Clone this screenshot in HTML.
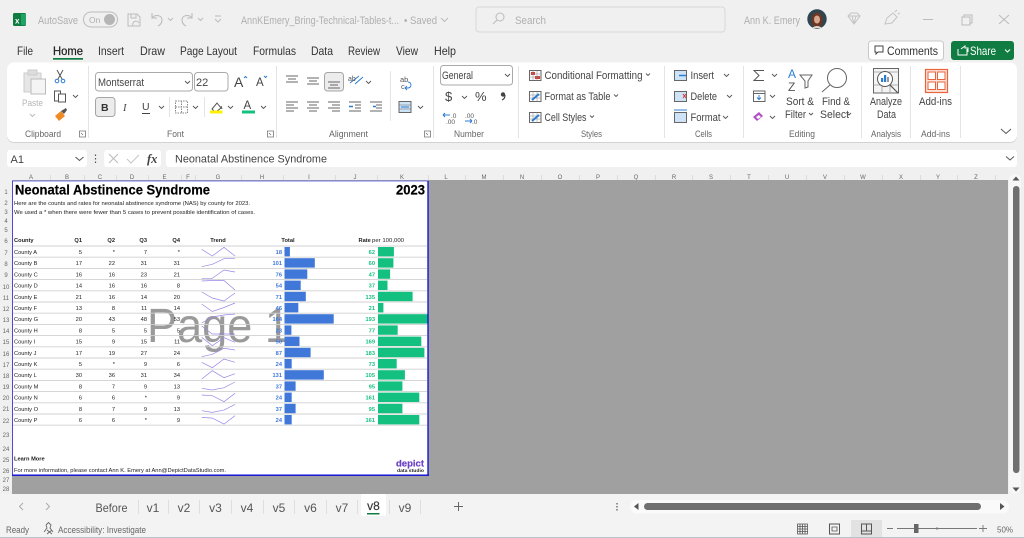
<!DOCTYPE html>
<html><head><meta charset="utf-8"><title>Excel</title>
<style>
html,body{margin:0;padding:0;background:#f0f0f0;width:1024px;height:538px;overflow:hidden}
svg{display:block;position:absolute;left:0;top:0;filter:blur(.3px)}
text{font-family:"Liberation Sans",sans-serif;fill:#404040;font-size:10px}
.t{fill:#afafaf;font-size:11px}
.m{fill:#333;font-size:12px}
.r{fill:#444;font-size:11px}
.g{fill:#666;font-size:9.5px}
.h{fill:#666;font-size:6px;text-anchor:middle}
.d{fill:#222;font-size:5.7px}
.n{fill:#222;font-size:5.7px;text-anchor:end}
.b{fill:#3f78d8;font-size:5.7px;text-anchor:end;font-weight:bold}
.c{fill:#14c080;font-size:5.7px;text-anchor:end;font-weight:bold}
.tab{fill:#555;font-size:12px;text-anchor:middle}
.ln{fill:none;stroke:#666;stroke-width:1}
.ch{fill:none;stroke:#555;stroke-width:.9}
.sp{fill:none;stroke:#9c86e6;stroke-width:.7}
</style></head><body>
<svg width="1024" height="538" viewBox="0 0 1024 538" xmlns="http://www.w3.org/2000/svg">
<rect width="1024" height="538" fill="#f0f0f0"/>

<!-- title bar -->
<rect x="13" y="13" width="13" height="13" rx="1.5" fill="#107c41"/><rect x="21" y="14" width="5" height="11" fill="#21a366"/>
<text x="15" y="23.500" style="font-size:8px;font-weight:bold;fill:#fff">x</text>
<text x="38" y="24" class="t" textLength="40" lengthAdjust="spacingAndGlyphs">AutoSave</text>
<rect x="83.500" y="12" width="34" height="15" rx="7.500" fill="none" stroke="#bbb"/>
<text x="89" y="23" class="t" style="font-size:8.500px">On</text><circle cx="109.500" cy="19.500" r="5.500" fill="#b5b5b5"/>
<path d="M128 14h9l3 3v9h-12zM131 14v4h5v-4M133 26a3 3 0 0 1 6-3" fill="none" stroke="#bdbdbd"/>
<path d="M152 13v5h5M152 18c3-4 10-3 10 2 0 3-2 5-4 6" fill="none" stroke="#bdbdbd" stroke-width="1.100"/>
<path d="M168 18l2.500 2.500 2.500-2.500M198 18l2.500 2.500 2.500-2.500" fill="none" stroke="#bdbdbd"/>
<path d="M192 13v5h-5M192 18c-3-4-10-3-10 2 0 3 2 5 4 6" fill="none" stroke="#bdbdbd" stroke-width="1.100"/>
<path d="M215 16h6M215 19l3 3 3-3" fill="none" stroke="#bdbdbd"/>
<text x="241" y="24" class="t" textLength="158" lengthAdjust="spacingAndGlyphs">AnnKEmery_Bring-Technical-Tables-t...</text>
<text x="404" y="24" class="t" textLength="33" lengthAdjust="spacingAndGlyphs">• Saved</text><path d="M441 18l3.500 3.500 3.500-3.500" fill="none" stroke="#bbb"/>
<rect x="476" y="7" width="249" height="25" rx="3" fill="#f0f0f0" stroke="#d8d8d8"/>
<circle cx="500" cy="17" r="4" fill="none" stroke="#bbb"/><path d="M497 20l-4 4" stroke="#bbb"/>
<text x="515" y="24" class="t" textLength="31" lengthAdjust="spacingAndGlyphs">Search</text>
<text x="744" y="24" class="t" textLength="56" lengthAdjust="spacingAndGlyphs">Ann K. Emery</text>
<circle cx="817" cy="19" r="9.700" fill="#2f4650"/><ellipse cx="817" cy="20" rx="5.500" ry="7.500" fill="#6d3524"/><ellipse cx="817" cy="19.500" rx="3" ry="4" fill="#d8a88e"/><path d="M812 28q5-4 10 0" fill="#e6d6cc"/>
<path d="M848 16l3-3h6l3 3-6 8zM848 16h12M852 16l2 8 2-8" fill="none" stroke="#c4c4c4"/>
<path d="M885 24l2-6 6-5 4 4-5 6zM895 12l2-2M898 14l2-1" fill="none" stroke="#c4c4c4"/>
<path d="M923 19.500h10" stroke="#bbb"/><path d="M962 17h8v8h-8zM964 17v-2h8v8h-2" fill="none" stroke="#bbb"/>
<path d="M999 15l10 9M1009 15l-10 9" stroke="#bbb"/>

<!-- tabs -->
<text x="17" y="55" class="m" textLength="16" lengthAdjust="spacingAndGlyphs">File</text>
<text x="53" y="55" class="m" textLength="30" lengthAdjust="spacingAndGlyphs" style="fill:#222;stroke:#222;stroke-width:.25">Home</text>
<rect x="53" y="58" width="30" height="1.700" fill="#107c41"/>
<text x="98" y="55" class="m" textLength="26" lengthAdjust="spacingAndGlyphs">Insert</text>
<text x="140" y="55" class="m" textLength="25" lengthAdjust="spacingAndGlyphs">Draw</text>
<text x="180" y="55" class="m" textLength="57" lengthAdjust="spacingAndGlyphs">Page Layout</text>
<text x="253" y="55" class="m" textLength="43" lengthAdjust="spacingAndGlyphs">Formulas</text>
<text x="311" y="55" class="m" textLength="22" lengthAdjust="spacingAndGlyphs">Data</text>
<text x="348" y="55" class="m" textLength="32" lengthAdjust="spacingAndGlyphs">Review</text>
<text x="396" y="55" class="m" textLength="22" lengthAdjust="spacingAndGlyphs">View</text>
<text x="434" y="55" class="m" textLength="22" lengthAdjust="spacingAndGlyphs">Help</text>
<rect x="868.500" y="41" width="75" height="19" rx="3" fill="#fff" stroke="#c8c8c8"/>
<path d="M875 46h8v6h-5l-2 2v-2h-1z" fill="none" stroke="#444"/>
<text x="887" y="55" class="m" textLength="51" lengthAdjust="spacingAndGlyphs">Comments</text>
<rect x="951" y="41" width="63" height="19" rx="3" fill="#107c41"/>
<path d="M958 49v6h9v-6M961 49l4-3v2h3v4" fill="none" stroke="#fff"/>
<text x="970" y="55" class="m" textLength="26" lengthAdjust="spacingAndGlyphs" style="fill:#fff">Share</text>
<path d="M1005 49.500l2.500 2.500 2.500-2.500" fill="none" stroke="#fff"/>

<!-- ribbon -->
<rect x="7" y="62.500" width="1010" height="79.500" rx="7" fill="#d2d2d2" transform="translate(0 1)"/>
<rect x="7" y="62.500" width="1010" height="79.500" rx="7" fill="#fff"/>
<path d="M88.500 66v72M276.500 66v72M390.500 71v50M433.500 66v72M518.500 66v72M664.500 66v72M743.500 66v72M861.500 66v72M910.500 66v72M960.500 66v72" stroke="#e4e4e4"/>
<path d="M169.500 97v20M204.500 97v20" stroke="#e4e4e4"/>
<!-- clipboard -->
<path d="M24 73h17v19h-17z" fill="#e6e6e6" stroke="#ccc"/><rect x="31" y="79" width="14.500" height="15" fill="#f4f4f4" stroke="#bbb"/><rect x="28" y="70" width="9" height="5" fill="#ddd" stroke="#ccc"/>
<text x="22" y="106" class="g" style="fill:#b5b5b5" textLength="21" lengthAdjust="spacingAndGlyphs">Paste</text>
<path d="M30 114l2.500 2.500 2.500-2.500" fill="none" stroke="#bbb"/>
<path d="M57 70l5 9M63 70l-5 9" stroke="#555" fill="none"/><circle cx="57" cy="81" r="1.800" fill="none" stroke="#2b7cd3"/><circle cx="63" cy="81" r="1.800" fill="none" stroke="#2b7cd3"/>
<path d="M54.500 91h6v10h-6z" fill="#fff" stroke="#555"/><path d="M58.500 94h7v8h-7z" fill="#fff" stroke="#555"/>
<path d="M73 95l2.500 2.500 2.500-2.500" class="ch"/>
<path d="M55 116l6-5 4 5-6 5z" fill="#f08a24"/><path d="M61 111l5-3 1 2-3 4" fill="#555"/>
<text x="25" y="137" class="g" textLength="36" lengthAdjust="spacingAndGlyphs">Clipboard</text>
<path d="M79.500 131h6v6h-6zM83 135l-2-2" fill="none" stroke="#777" stroke-width=".8"/>
<!-- font -->
<rect x="95.500" y="72.500" width="97" height="18.500" rx="3" fill="#fff" stroke="#aaa"/>
<text x="98" y="86" class="r" textLength="46" lengthAdjust="spacingAndGlyphs">Montserrat</text>
<path d="M185 81l2.500 2.500 2.500-2.500M221 81l2.500 2.500 2.500-2.500" class="ch"/>
<rect x="194.500" y="72.500" width="33.500" height="18.500" rx="3" fill="#fff" stroke="#aaa"/>
<text x="196" y="86" class="r">22</text>
<text x="234" y="87" style="font-size:14px;fill:#444">A</text><path d="M244 78l1.500-1.500 1.500 1.500" fill="none" stroke="#2b7cd3"/>
<text x="256" y="86" style="font-size:11.500px;fill:#444">A</text><path d="M264 76l1.500 1.500 1.500-1.500" fill="none" stroke="#2b7cd3"/>
<rect x="95.500" y="97.500" width="19.500" height="19" rx="3" fill="#ececec" stroke="#a5a5a5"/>
<text x="101" y="111" style="font-size:10.500px;font-weight:bold;fill:#333">B</text>
<text x="123" y="111" style="font-size:10.500px;font-style:italic;font-family:'Liberation Serif',serif;fill:#444">I</text>
<text x="142" y="110" style="font-size:10.500px;fill:#444">U</text><path d="M142 113.500h8" stroke="#444"/>
<path d="M159 106l2.500 2.500 2.500-2.500M193 106l2.500 2.500 2.500-2.500M228 106l2.500 2.500 2.500-2.500M261 106l2.500 2.500 2.500-2.500" class="ch"/>
<path d="M175.500 101h12v12h-12zM181.500 101v12M175.500 107h12" fill="none" stroke="#888" stroke-dasharray="1.500 1"/>
<path d="M212 109l5-6 4 5-4 3h-3z" fill="#fff" stroke="#555"/><path d="M221 106l1 3" stroke="#555"/>
<rect x="210" y="110.500" width="12.500" height="3" fill="#ffef00"/>
<text x="243.500" y="109" style="font-size:11.500px;fill:#444">A</text><rect x="242" y="110.500" width="13" height="3" fill="#14c080"/>
<text x="167" y="137" class="g" textLength="17" lengthAdjust="spacingAndGlyphs">Font</text>
<path d="M267.500 131h6v6h-6zM271 135l-2-2" fill="none" stroke="#777" stroke-width=".8"/>
<!-- alignment -->
<path d="M286 76h12M288 79h8M286 82h12M307 78h12M309 81h8M307 84h12" class="ln"/>
<rect x="324.500" y="72.500" width="19" height="18.500" rx="3" fill="#ececec" stroke="#a5a5a5"/>
<path d="M328 82h12M330 85h8M328 88h12" class="ln"/>
<path d="M350 83l9-7M355 84l8-7" stroke="#2b7cd3" fill="none"/><text x="348" y="81" style="font-size:7px;fill:#555">ab</text>
<path d="M366 81l2.500 2.500 2.500-2.500M418 106l2.500 2.500 2.500-2.500" class="ch"/>
<path d="M286 102h12M286 105h8M286 108h12M286 111h8M307 102h12M309 105h8M307 108h12M309 111h8M328 102h12M332 105h8M328 108h12M332 111h8M349 102h12M349 111h12M370 102h12M370 111h12" class="ln"/>
<path d="M355 105h6M355 108h6M376 105h6M376 108h6" class="ln"/>
<path d="M349 106.500h4M373 106.500h3" stroke="#2b7cd3" stroke-width="1.500"/>
<text x="400" y="82" style="font-size:7.500px;fill:#555">ab</text><text x="401" y="89" style="font-size:7.500px;fill:#555">c</text><path d="M405 88h3a2 2 0 0 0 0-6M405 88l2-2M405 88l2 2" fill="none" stroke="#2b7cd3" stroke-width=".9"/>
<rect x="399" y="101.500" width="12" height="11" fill="#cfe3f7" stroke="#666"/><path d="M399 105h12M399 109h12" stroke="#666" stroke-width=".6"/><path d="M401 107h8" stroke="#2b7cd3"/>
<text x="329" y="137" class="g" textLength="39" lengthAdjust="spacingAndGlyphs">Alignment</text>
<path d="M424.500 131h6v6h-6zM428 135l-2-2" fill="none" stroke="#777" stroke-width=".8"/>
<!-- number -->
<rect x="440.500" y="65.500" width="72" height="19.500" rx="3" fill="#fff" stroke="#aaa"/>
<text x="442" y="79" class="r" textLength="31" lengthAdjust="spacingAndGlyphs">General</text>
<path d="M505 74l2.500 2.500 2.500-2.500M462 96l2.500 2.500 2.500-2.500" class="ch"/>
<text x="445" y="101" style="font-size:13px;fill:#444">$</text>
<text x="475" y="101" style="font-size:13px;fill:#444">%</text>
<circle cx="503" cy="94.500" r="2.200" fill="#444"/><path d="M505 95c0 3-1 4-3 5" fill="none" stroke="#444" stroke-width="1.200"/>
<text x="451" y="118" style="font-size:6.500px;fill:#555">.0</text><text x="446" y="124" style="font-size:6.500px;fill:#555">.00</text>
<path d="M443 115h7M443 115l2-2M443 115l2 2" fill="none" stroke="#2b7cd3"/>
<text x="465" y="118" style="font-size:6.500px;fill:#555">.00</text><text x="472" y="124" style="font-size:6.500px;fill:#555">.0</text>
<path d="M465 121h7M472 121l-2-2M472 121l-2 2" fill="none" stroke="#2b7cd3"/>
<text x="454" y="137" class="g" textLength="30" lengthAdjust="spacingAndGlyphs">Number</text>
<!-- styles -->
<rect x="529.500" y="70.500" width="11.500" height="10" fill="#fff" stroke="#666"/><rect x="531" y="72" width="4" height="3" fill="#d9352a"/><rect x="535" y="76" width="5" height="3" fill="#d9352a"/><path d="M533 70.500v10M537 70.500v10M529.500 74h11.500M529.500 77h11.500" stroke="#888" stroke-width=".5"/>
<rect x="529.500" y="91.500" width="11.500" height="10" fill="#fff" stroke="#666"/><path d="M533 91.500v10M537 91.500v10M529.500 95h11.500M529.500 98h11.500" stroke="#888" stroke-width=".5"/><path d="M532 100l7-6" stroke="#2b7cd3" stroke-width="2"/>
<rect x="529.500" y="112.500" width="11.500" height="10" fill="#fff" stroke="#666"/><path d="M533 112.500v10M537 112.500v10M529.500 116h11.500M529.500 119h11.500" stroke="#888" stroke-width=".5"/><path d="M532 121l7-6" stroke="#2b7cd3" stroke-width="2"/>
<text x="544.500" y="79" class="r" textLength="98" lengthAdjust="spacingAndGlyphs">Conditional Formatting</text>
<text x="544.500" y="100" class="r" textLength="66" lengthAdjust="spacingAndGlyphs">Format as Table</text>
<text x="544.500" y="121" class="r" textLength="42" lengthAdjust="spacingAndGlyphs">Cell Styles</text>
<path d="M646 73.500l2 2 2-2M614 94.500l2 2 2-2M590 115.500l2 2 2-2" class="ch"/>
<text x="581" y="137" class="g" textLength="21" lengthAdjust="spacingAndGlyphs">Styles</text>
<!-- cells -->
<rect x="674.500" y="70.500" width="12" height="10" fill="#cfe3f7" stroke="#666"/><path d="M679 75.500h7" stroke="#2b7cd3" stroke-width="1.500"/>
<rect x="674.500" y="91.500" width="12" height="10" fill="#cfe3f7" stroke="#666"/><path d="M683 94l3 4M686 94l-3 4" stroke="#d9352a"/>
<rect x="674.500" y="112.500" width="12" height="10" fill="#cfe3f7" stroke="#666"/><path d="M674 110h13" stroke="#2b7cd3"/>
<text x="690.500" y="79" class="r" textLength="23.500" lengthAdjust="spacingAndGlyphs">Insert</text>
<text x="690.500" y="100" class="r" textLength="26.500" lengthAdjust="spacingAndGlyphs">Delete</text>
<text x="690.500" y="121" class="r" textLength="30" lengthAdjust="spacingAndGlyphs">Format</text>
<path d="M724 74l2.500 2.500 2.500-2.500M727 95l2.500 2.500 2.500-2.500M723 116l2.500 2.500 2.500-2.500" class="ch"/>
<text x="695" y="137" class="g" textLength="17" lengthAdjust="spacingAndGlyphs">Cells</text>
<!-- editing -->
<path d="M764 70.500h-10l5 5-5 5h10" fill="none" stroke="#555"/>
<path d="M772 74l2.500 2.500 2.500-2.500M770 95l2.500 2.500 2.500-2.500M770 116l2.500 2.500 2.500-2.500" class="ch"/>
<rect x="753.500" y="91" width="11.500" height="10.500" fill="#fff" stroke="#666"/><path d="M753.500 93.500h11.500" stroke="#666"/><path d="M759 95v4M757 97.500l2 2 2-2" fill="none" stroke="#2b7cd3"/>
<path d="M753 117l6-5 4 4-6 5z" fill="#b14fc5"/><path d="M756 117l3-2 2 2-3 2z" fill="#fff"/>
<text x="788" y="78" style="font-size:12px;fill:#2b7cd3">A</text><text x="788" y="91" style="font-size:12px;fill:#555">Z</text>
<path d="M800 75h12l-4 6v6l-3 1v-7z" fill="none" stroke="#666"/>
<text x="786" y="105" class="r" textLength="28" lengthAdjust="spacingAndGlyphs">Sort &amp;</text>
<text x="785" y="118" class="r" textLength="21" lengthAdjust="spacingAndGlyphs">Filter</text>
<circle cx="837" cy="78" r="9.500" fill="none" stroke="#666"/><path d="M830 85l-8 7" stroke="#666"/>
<text x="822" y="105" class="r" textLength="28" lengthAdjust="spacingAndGlyphs">Find &amp;</text>
<text x="820" y="118" class="r" textLength="29" lengthAdjust="spacingAndGlyphs">Select</text>
<path d="M809 113l2 2 2-2M847 113l2 2 2-2" class="ch"/>
<text x="789" y="137" class="g" textLength="26" lengthAdjust="spacingAndGlyphs">Editing</text>
<!-- analyze -->
<rect x="873.500" y="68.500" width="25" height="24.500" fill="#f4f4f4" stroke="#666"/>
<path d="M873.500 72h25M873.500 85h25M882 85v8M890 85v8" stroke="#999" stroke-width=".8"/>
<circle cx="885" cy="79" r="7.500" fill="#fff" stroke="#555"/><rect x="881" y="78" width="2.200" height="4" fill="#2b7cd3"/><rect x="884" y="75" width="2.200" height="7" fill="#2b7cd3"/><rect x="887" y="77" width="2" height="5" fill="#999"/>
<path d="M890 85l8 8" stroke="#555" stroke-width="1.200"/>
<text x="870" y="105" class="r" textLength="32" lengthAdjust="spacingAndGlyphs">Analyze</text><text x="877" y="118" class="r" textLength="19" lengthAdjust="spacingAndGlyphs">Data</text>
<text x="871" y="137" class="g" textLength="30" lengthAdjust="spacingAndGlyphs">Analysis</text>
<rect x="925.500" y="69.500" width="22" height="23" fill="#fbe4dc" stroke="#e9643b" stroke-width="1.200"/>
<rect x="928" y="72" width="7.500" height="7.500" fill="#fff" stroke="#e9643b"/><rect x="937.500" y="72" width="7.500" height="7.500" fill="#fff" stroke="#e9643b"/><rect x="928" y="82" width="7.500" height="7.500" fill="#fff" stroke="#e9643b"/><rect x="937.500" y="82" width="7.500" height="7.500" fill="#fff" stroke="#e9643b"/>
<text x="919" y="105" class="r" textLength="33" lengthAdjust="spacingAndGlyphs">Add-ins</text>
<text x="921" y="137" class="g" textLength="29" lengthAdjust="spacingAndGlyphs">Add-ins</text>
<path d="M1001 129l5 4.500 5-4.500" fill="none" stroke="#555"/>

<!-- formula bar -->
<rect x="7" y="150" width="80" height="17" rx="3" fill="#fff"/>
<text x="10.500" y="163" class="r">A1</text>
<path d="M75.500 157l4 3.500 4-3.500" fill="none" stroke="#555"/>
<path d="M95.500 154.500v1.500M95.500 158v1.500M95.500 161.500v1.500" stroke="#555" stroke-width="1.200"/>
<rect x="104" y="150" width="57" height="17" rx="3" fill="#fff"/>
<path d="M109 154l9 9M118 154l-9 9" stroke="#bbb"/><path d="M127 159l4 4 8-8" fill="none" stroke="#c4c4c4"/>
<text x="147" y="163" style="font-family:'Liberation Serif',serif;font-style:italic;font-size:12.500px;fill:#444;font-weight:bold">fx</text>
<rect x="166" y="150" width="851" height="17" rx="3" fill="#fff"/>
<text x="175" y="162.500" class="r" textLength="152" lengthAdjust="spacingAndGlyphs">Neonatal Abstinence Syndrome</text>
<path d="M1006 156.500l4 3.500 4-3.500" fill="none" stroke="#555"/>

<!-- col headers -->
<g>
<text x="31" y="179" class="h">A</text><text x="67" y="179" class="h">B</text><text x="100" y="179" class="h">C</text><text x="132" y="179" class="h">D</text><text x="164.500" y="179" class="h">E</text><text x="188" y="179" class="h">F</text><text x="218" y="179" class="h">G</text><text x="262" y="179" class="h">H</text><text x="309" y="179" class="h">I</text><text x="355" y="179" class="h">J</text><text x="402" y="179" class="h">K</text><text x="446" y="179" class="h">L</text><text x="484" y="179" class="h">M</text><text x="522" y="179" class="h">N</text><text x="560" y="179" class="h">O</text><text x="598" y="179" class="h">P</text><text x="636" y="179" class="h">Q</text><text x="674" y="179" class="h">R</text><text x="711" y="179" class="h">S</text><text x="749" y="179" class="h">T</text><text x="787" y="179" class="h">U</text><text x="825" y="179" class="h">V</text><text x="863" y="179" class="h">W</text><text x="901" y="179" class="h">X</text><text x="938" y="179" class="h">Y</text><text x="976" y="179" class="h">Z</text>
</g>
<path d="M50.500 175v5M84.500 175v5M116.500 175v5M148.500 175v5M181.500 175v5M195.500 175v5M241.500 175v5M283.500 175v5M335.500 175v5M377.500 175v5M428.500 175v5M465.500 175v5M503.500 175v5M541.500 175v5M579.500 175v5M617.500 175v5M655.500 175v5M692.500 175v5M730.500 175v5M768.500 175v5M806.500 175v5M844.500 175v5M882.500 175v5M920.500 175v5M957.500 175v5M995.500 175v5" stroke="#dcdcdc"/>

<!-- sheet -->
<rect x="12" y="180" width="996" height="314" fill="#a0a0a0"/>
<rect x="12.500" y="181" width="415" height="294" fill="#fff"/>
<!-- row labels -->
<g>
<text x="6" y="194" class="h">1</text><text x="6" y="205" class="h">2</text><text x="6" y="214" class="h">3</text><text x="6" y="223" class="h">4</text><text x="6" y="232" class="h">5</text><text x="6" y="243" class="h">6</text><text x="6" y="255" class="h">7</text><text x="6" y="266" class="h">8</text><text x="6" y="277" class="h">9</text><text x="6" y="289" class="h">10</text><text x="6" y="300" class="h">11</text><text x="6" y="311" class="h">12</text><text x="6" y="322" class="h">13</text><text x="6" y="333" class="h">14</text><text x="6" y="344" class="h">15</text><text x="6" y="356" class="h">16</text><text x="6" y="367" class="h">17</text><text x="6" y="378" class="h">18</text><text x="6" y="389" class="h">19</text><text x="6" y="400" class="h">20</text><text x="6" y="411" class="h">21</text><text x="6" y="423" class="h">22</text><text x="6" y="437" class="h">23</text><text x="6" y="451" class="h">24</text><text x="6" y="462" class="h">25</text><text x="6" y="473" class="h">26</text><text x="6" y="482" class="h">27</text><text x="6" y="491" class="h">28</text>
</g>
<!-- watermark -->
<text x="147" y="342" style="font-size:48px;fill:#9a9a9a" textLength="143" lengthAdjust="spacingAndGlyphs">Page 1</text>
<!-- row rules -->
<path d="M13 246h414M13 257.200h414M13 268.400h414M13 279.600h414M13 290.800h414M13 302h414M13 313.200h414M13 324.400h414M13 335.600h414M13 346.800h414M13 358h414M13 369.200h414M13 380.400h414M13 391.600h414M13 402.800h414M13 414h414M13 425.200h414" stroke="#d0d0d0" stroke-width=".9"/>
<!-- page text -->
<text x="15" y="194.500" style="font-size:13.500px;font-weight:bold;fill:#000;stroke:#000;stroke-width:.2" textLength="195" lengthAdjust="spacingAndGlyphs">Neonatal Abstinence Syndrome</text>
<text x="396" y="194.500" style="font-size:13.500px;font-weight:bold;fill:#000;stroke:#000;stroke-width:.2" textLength="29" lengthAdjust="spacingAndGlyphs">2023</text>
<text x="14" y="205" class="d" textLength="236" lengthAdjust="spacingAndGlyphs">Here are the counts and rates for neonatal abstinence syndrome (NAS) by county for 2023.</text>
<text x="14" y="214" class="d" textLength="241" lengthAdjust="spacingAndGlyphs">We used a * when there were fewer than 5 cases to prevent possible identification of cases.</text>
<g>
<text x="14" y="242" class="d" style="font-weight:bold">County</text>
<text x="82" y="242" class="n" style="font-weight:bold">Q1</text><text x="115" y="242" class="n" style="font-weight:bold">Q2</text><text x="147" y="242" class="n" style="font-weight:bold">Q3</text><text x="180" y="242" class="n" style="font-weight:bold">Q4</text>
<text x="218" y="242" class="n" style="font-weight:bold;text-anchor:middle">Trend</text>
<text x="288" y="242" class="n" style="font-weight:bold;text-anchor:middle">Total</text>
<text x="358.500" y="242" class="d" style="font-weight:bold">Rate</text>
</g>
<text x="372" y="242" class="d" textLength="32" lengthAdjust="spacingAndGlyphs">per 100,000</text>
<!-- bars total -->
<g fill="#3f78d8">
<rect x="284.500" y="247" width="5.400" height="9.400"/><rect x="284.500" y="258.200" width="30.300" height="9.400"/><rect x="284.500" y="269.400" width="22.800" height="9.400"/><rect x="284.500" y="280.600" width="16.200" height="9.400"/><rect x="284.500" y="291.800" width="21.300" height="9.400"/><rect x="284.500" y="303" width="13.800" height="9.400"/><rect x="284.500" y="314.200" width="49.200" height="9.400"/><rect x="284.500" y="325.400" width="6.900" height="9.400"/><rect x="284.500" y="336.600" width="15" height="9.400"/><rect x="284.500" y="347.800" width="26.100" height="9.400"/><rect x="284.500" y="359" width="7.200" height="9.400"/><rect x="284.500" y="370.200" width="39.300" height="9.400"/><rect x="284.500" y="381.400" width="11.100" height="9.400"/><rect x="284.500" y="392.600" width="7.200" height="9.400"/><rect x="284.500" y="403.800" width="11.100" height="9.400"/><rect x="284.500" y="415" width="7.200" height="9.400"/>
</g>
<!-- bars rate -->
<g fill="#14c080">
<rect x="378" y="247" width="15.900" height="9.400"/><rect x="378" y="258.200" width="15.400" height="9.400"/><rect x="378" y="269.400" width="12.100" height="9.400"/><rect x="378" y="280.600" width="9.500" height="9.400"/><rect x="378" y="291.800" width="34.600" height="9.400"/><rect x="378" y="303" width="5.400" height="9.400"/><rect x="378" y="314.200" width="49.500" height="9.400"/><rect x="378" y="325.400" width="19.700" height="9.400"/><rect x="378" y="336.600" width="43.300" height="9.400"/><rect x="378" y="347.800" width="46.400" height="9.400"/><rect x="378" y="359" width="18.700" height="9.400"/><rect x="378" y="370.200" width="26.900" height="9.400"/><rect x="378" y="381.400" width="24.400" height="9.400"/><rect x="378" y="392.600" width="41.300" height="9.400"/><rect x="378" y="403.800" width="24.400" height="9.400"/><rect x="378" y="415" width="41.300" height="9.400"/>
</g>
<!-- sparklines -->
<g>
<polyline class="sp" points="201.700,249.300 212.300,256 224,247.300 235,256"/>
<polyline class="sp" points="201.700,266.700 212.300,264.300 224,258.700 235,258.300"/>
<polyline class="sp" points="201.700,278.300 212.300,278.300 224,270 235,272"/>
<polyline class="sp" points="201.700,281 212.300,280.500 224,280.500 235,290"/>
<polyline class="sp" points="201.700,292 212.300,298 224,301 235,293"/>
<polyline class="sp" points="201.700,304 212.300,311.500 224,307.500 235,303"/>
<polyline class="sp" points="201.700,323 212.300,317 224,315 235,314"/>
<polyline class="sp" points="201.700,326 212.300,334 224,334 235,334"/>
<polyline class="sp" points="201.700,337.300 212.300,345.700 224,337.700 235,342.300"/>
<polyline class="sp" points="201.700,356.700 212.300,354.300 224,348.300 235,350"/>
<polyline class="sp" points="201.700,362.300 212.300,367.700 224,359 235,362.300"/>
<polyline class="sp" points="201.700,379 212.300,370.700 224,377.700 235,373.700"/>
<polyline class="sp" points="201.700,388.300 212.300,390 224,387.700 235,382"/>
<polyline class="sp" points="201.700,395 212.300,395.700 224,401.700 235,393.300"/>
<polyline class="sp" points="201.700,410.700 212.300,412.400 224,410.100 235,404.400"/>
<polyline class="sp" points="201.700,417.400 212.300,418.100 224,424.100 235,415.700"/>
</g>
<!-- table rows -->
<text x="14" y="254" class="d">County A</text><text x="82" y="254" class="n">5</text><text x="115" y="254" class="n">*</text><text x="147" y="254" class="n">7</text><text x="180" y="254" class="n">*</text><text x="282" y="254" class="b">18</text><text x="375" y="254" class="c">62</text>
<text x="14" y="265.200" class="d">County B</text><text x="82" y="265.200" class="n">17</text><text x="115" y="265.200" class="n">22</text><text x="147" y="265.200" class="n">31</text><text x="180" y="265.200" class="n">31</text><text x="282" y="265.200" class="b">101</text><text x="375" y="265.200" class="c">60</text>
<text x="14" y="276.400" class="d">County C</text><text x="82" y="276.400" class="n">16</text><text x="115" y="276.400" class="n">16</text><text x="147" y="276.400" class="n">23</text><text x="180" y="276.400" class="n">21</text><text x="282" y="276.400" class="b">76</text><text x="375" y="276.400" class="c">47</text>
<text x="14" y="287.600" class="d">County D</text><text x="82" y="287.600" class="n">14</text><text x="115" y="287.600" class="n">16</text><text x="147" y="287.600" class="n">16</text><text x="180" y="287.600" class="n">8</text><text x="282" y="287.600" class="b">54</text><text x="375" y="287.600" class="c">37</text>
<text x="14" y="298.800" class="d">County E</text><text x="82" y="298.800" class="n">21</text><text x="115" y="298.800" class="n">16</text><text x="147" y="298.800" class="n">14</text><text x="180" y="298.800" class="n">20</text><text x="282" y="298.800" class="b">71</text><text x="375" y="298.800" class="c">135</text>
<text x="14" y="310" class="d">County F</text><text x="82" y="310" class="n">13</text><text x="115" y="310" class="n">8</text><text x="147" y="310" class="n">11</text><text x="180" y="310" class="n">14</text><text x="282" y="310" class="b">46</text><text x="375" y="310" class="c">21</text>
<text x="14" y="321.200" class="d">County G</text><text x="82" y="321.200" class="n">20</text><text x="115" y="321.200" class="n">43</text><text x="147" y="321.200" class="n">48</text><text x="180" y="321.200" class="n">53</text><text x="282" y="321.200" class="b">164</text><text x="375" y="321.200" class="c">193</text>
<text x="14" y="332.400" class="d">County H</text><text x="82" y="332.400" class="n">8</text><text x="115" y="332.400" class="n">5</text><text x="147" y="332.400" class="n">5</text><text x="180" y="332.400" class="n">5</text><text x="282" y="332.400" class="b">23</text><text x="375" y="332.400" class="c">77</text>
<text x="14" y="343.600" class="d">County I</text><text x="82" y="343.600" class="n">15</text><text x="115" y="343.600" class="n">9</text><text x="147" y="343.600" class="n">15</text><text x="180" y="343.600" class="n">11</text><text x="282" y="343.600" class="b">50</text><text x="375" y="343.600" class="c">169</text>
<text x="14" y="354.800" class="d">County J</text><text x="82" y="354.800" class="n">17</text><text x="115" y="354.800" class="n">19</text><text x="147" y="354.800" class="n">27</text><text x="180" y="354.800" class="n">24</text><text x="282" y="354.800" class="b">87</text><text x="375" y="354.800" class="c">183</text>
<text x="14" y="366" class="d">County K</text><text x="82" y="366" class="n">5</text><text x="115" y="366" class="n">*</text><text x="147" y="366" class="n">9</text><text x="180" y="366" class="n">6</text><text x="282" y="366" class="b">24</text><text x="375" y="366" class="c">73</text>
<text x="14" y="377.200" class="d">County L</text><text x="82" y="377.200" class="n">30</text><text x="115" y="377.200" class="n">36</text><text x="147" y="377.200" class="n">31</text><text x="180" y="377.200" class="n">34</text><text x="282" y="377.200" class="b">131</text><text x="375" y="377.200" class="c">105</text>
<text x="14" y="388.400" class="d">County M</text><text x="82" y="388.400" class="n">8</text><text x="115" y="388.400" class="n">7</text><text x="147" y="388.400" class="n">9</text><text x="180" y="388.400" class="n">13</text><text x="282" y="388.400" class="b">37</text><text x="375" y="388.400" class="c">95</text>
<text x="14" y="399.600" class="d">County N</text><text x="82" y="399.600" class="n">6</text><text x="115" y="399.600" class="n">6</text><text x="147" y="399.600" class="n">*</text><text x="180" y="399.600" class="n">9</text><text x="282" y="399.600" class="b">24</text><text x="375" y="399.600" class="c">161</text>
<text x="14" y="410.800" class="d">County O</text><text x="82" y="410.800" class="n">8</text><text x="115" y="410.800" class="n">7</text><text x="147" y="410.800" class="n">9</text><text x="180" y="410.800" class="n">13</text><text x="282" y="410.800" class="b">37</text><text x="375" y="410.800" class="c">95</text>
<text x="14" y="422" class="d">County P</text><text x="82" y="422" class="n">6</text><text x="115" y="422" class="n">6</text><text x="147" y="422" class="n">*</text><text x="180" y="422" class="n">9</text><text x="282" y="422" class="b">24</text><text x="375" y="422" class="c">161</text>
<text x="14" y="460.500" class="d" style="font-weight:bold">Learn More</text>
<text x="14" y="472" class="d" textLength="212" lengthAdjust="spacingAndGlyphs">For more information, please contact Ann K. Emery at Ann@DepictDataStudio.com.</text>
<text x="396" y="466.500" style="font-size:9px;font-weight:bold;fill:#6a3fc8;stroke:#6a3fc8;stroke-width:.2" textLength="28" lengthAdjust="spacingAndGlyphs">depict</text>
<text x="397" y="472" style="font-size:4.800px;font-weight:bold;fill:#222" textLength="27" lengthAdjust="spacingAndGlyphs">data studio</text>
<!-- page border -->
<path d="M12.500 181H427.500" stroke="#7a78e0" stroke-width="1"/>
<path d="M12.500 181V475" stroke="#4a4ae0" stroke-width="1"/>
<path d="M428 181V475.500M12 475.200H429" stroke="#0808d8" stroke-width="1.300" fill="none"/>

<!-- vscroll -->
<rect x="1009" y="174" width="12" height="320" rx="6" fill="#f7f7f7"/>
<path d="M1016 176.500l3.500 4h-7z" fill="#555"/><path d="M1016 491.500l-3.500-4h7z" fill="#555"/>
<rect x="1013" y="186" width="6.500" height="287" rx="3.200" fill="#707070"/>

<!-- sheet tabs -->
<rect x="0" y="494" width="1024" height="44" fill="#f3f3f3"/>
<path d="M23 503l-3.500 3.500 3.500 3.500" fill="none" stroke="#aaa"/><path d="M46 503l3.500 3.500-3.500 3.500" fill="none" stroke="#aaa"/>
<rect x="361" y="494" width="25" height="22" rx="2" fill="#fff"/>
<text x="111.500" y="512" class="tab" textLength="32" lengthAdjust="spacingAndGlyphs">Before</text><text x="153" y="512" class="tab">v1</text><text x="184" y="512" class="tab">v2</text><text x="215.500" y="512" class="tab">v3</text><text x="247" y="512" class="tab">v4</text><text x="279" y="512" class="tab">v5</text><text x="310.500" y="512" class="tab">v6</text><text x="342" y="512" class="tab">v7</text>
<text x="373.500" y="510" class="tab" style="fill:#333;stroke:#333;stroke-width:.15">v8</text><rect x="367" y="513" width="12.500" height="1.500" fill="#107c41"/>
<text x="405" y="512" class="tab">v9</text>
<path d="M138.500 500v14M168.500 500v14M199.500 500v14M231.500 500v14M263.500 500v14M294.500 500v14M326.500 500v14M357.500 500v14M389.500 500v14M420.500 500v14" stroke="#dedede"/>
<path d="M454 506.500h9M458.500 502v9" stroke="#666"/>
<path d="M617 503v1.500M617 506v1.500M617 509v1.500" stroke="#555" stroke-width="1.200"/>
<rect x="630" y="500" width="379" height="13.500" rx="6.700" fill="#fafafa"/>
<path d="M634 506.500l4.500-3.500v7z" fill="#555"/><path d="M1004.500 506.500l-4.500-3.500v7z" fill="#555"/>
<rect x="644" y="503" width="337" height="7" rx="3.500" fill="#707070"/>

<!-- status -->
<text x="6" y="533" class="g" style="font-size:9px;fill:#666" textLength="23" lengthAdjust="spacingAndGlyphs">Ready</text>
<path d="M46 525l2.500-2.500 2.500 2.500-1 3 3 4M46 525l1 3-3 4M47 530l5 4M52 530l-5 4" fill="none" stroke="#666" stroke-width=".9"/>
<text x="58" y="533" class="g" style="font-size:9px;fill:#666" textLength="88" lengthAdjust="spacingAndGlyphs">Accessibility: Investigate</text>
<rect x="851" y="520" width="31" height="17" fill="#e2e2e2"/>
<path d="M797.500 524h10v10h-10zM797.500 526.500h10M797.500 529h10M797.500 531.500h10M800 524v10M802.500 524v10M805 524v10" fill="none" stroke="#555" stroke-width=".8"/>
<path d="M829.500 524h10v10h-10z" fill="none" stroke="#555"/><path d="M832 527h5v4h-5z" fill="none" stroke="#555" stroke-width=".8"/>
<path d="M861.500 524h10v10h-10zM861.500 531h10M866.500 524v7" fill="none" stroke="#555"/>
<path d="M887 528.500h6M897 528.500h80M979 528.500h8M983 525v7M937 527v3" stroke="#777" stroke-width=".9"/>
<rect x="914" y="524" width="4.500" height="9" fill="#666"/>
<text x="997" y="532.500" class="g" style="font-size:8.500px;fill:#666" textLength="16" lengthAdjust="spacingAndGlyphs">50%</text>
<rect x="0" y="537" width="1024" height="1" fill="#b9c2c6"/>
</svg>
</body></html>
